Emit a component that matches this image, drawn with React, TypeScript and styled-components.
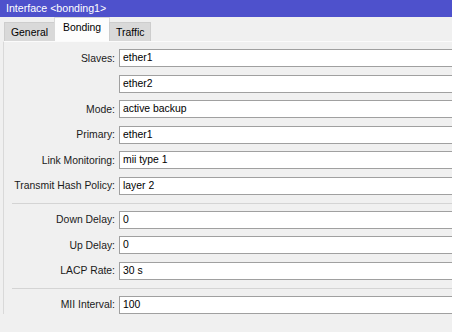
import React from 'react'
import styled, { createGlobalStyle } from 'styled-components'

const GlobalStyle = createGlobalStyle`
  html, body {
    margin: 0;
    padding: 0;
    background: #f0f0f0;
    overflow: hidden;
  }
  body {
    font-family: "Liberation Sans", Arial, sans-serif;
    font-size: 10.4px;
    color: #000;
  }
`

const Window = styled.div`
  width: 452px;
  height: 332px;
  background: #f0f0f0;
  overflow: hidden;
`

const TitleBar = styled.div`
  height: 17px;
  line-height: 17px;
  padding-left: 6px;
  background: #4e51cc;
  color: #fff;
  font-size: 10.6px;
  white-space: nowrap;
`

const TabStrip = styled.div`
  display: flex;
  align-items: flex-end;
  height: 24px;
  padding-left: 5px;
`

const Tab = styled.div<{ $active?: boolean }>`
  box-sizing: border-box;
  display: flex;
  align-items: center;
  height: ${(p) => (p.$active ? '24px' : '19px')};
  padding: ${(p) => (p.$active ? '0 8px 4px' : '0 6px')};
  background: ${(p) => (p.$active ? '#fdfdfd' : '#d9d9d9')};
  border: 1px solid ${(p) => (p.$active ? '#d9d9d9' : '#cdcdcd')};
  border-bottom: none;
  margin-left: -1px;
  color: #000;
  white-space: nowrap;
`

const Panel = styled.div`
  margin-left: 3px;
  margin-right: -20px;
  padding-top: 7px;
  border-left: 1px solid #d9d9d9;
  border-top: 1px solid #fbfbfb;
`

const Section = styled.div`
  display: flex;
  flex-direction: column;
  gap: 7.5px;
`

const Row = styled.div`
  display: grid;
  grid-template-columns: 111px 1fr;
  column-gap: 4px;
  align-items: center;
`

const Label = styled.div`
  text-align: right;
  color: #1a1a1a;
  white-space: nowrap;
`

const Field = styled.div`
  box-sizing: border-box;
  height: 18px;
  line-height: 16px;
  padding-left: 3px;
  background: #fff;
  border: 1px solid #a0a0a0;
  white-space: nowrap;
`

const Separator = styled.div`
  height: 0;
  margin: 8.5px 0 6.5px 8px;
  border-top: 1px solid #d4d4d4;
`

type FieldRow = { label: string; value: string }

const mainRows: FieldRow[] = [
  { label: 'Slaves:', value: 'ether1' },
  { label: '', value: 'ether2' },
  { label: 'Mode:', value: 'active backup' },
  { label: 'Primary:', value: 'ether1' },
  { label: 'Link Monitoring:', value: 'mii type 1' },
  { label: 'Transmit Hash Policy:', value: 'layer 2' },
]

const delayRows: FieldRow[] = [
  { label: 'Down Delay:', value: '0' },
  { label: 'Up Delay:', value: '0' },
  { label: 'LACP Rate:', value: '30 s' },
]

const miiRows: FieldRow[] = [{ label: 'MII Interval:', value: '100' }]

const renderRows = (rows: FieldRow[]) =>
  rows.map((r, i) => (
    <Row key={i}>
      <Label>{r.label}</Label>
      <Field>{r.value}</Field>
    </Row>
  ))

export default function App() {
  return (
    <Window>
      <GlobalStyle />
      <TitleBar>Interface &lt;bonding1&gt;</TitleBar>
      <TabStrip>
        <Tab>General</Tab>
        <Tab $active>Bonding</Tab>
        <Tab>Traffic</Tab>
      </TabStrip>
      <Panel>
        <Section>{renderRows(mainRows)}</Section>
        <Separator />
        <Section>{renderRows(delayRows)}</Section>
        <Separator />
        <Section>{renderRows(miiRows)}</Section>
      </Panel>
    </Window>
  )
}
